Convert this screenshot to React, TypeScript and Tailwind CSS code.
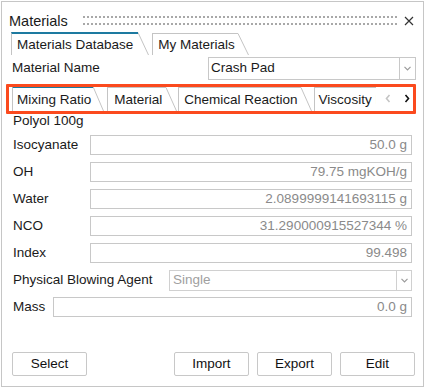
import React from "react";

const Slant = ({ h }: { h: number }) => (
  <svg width="11" height={h} className="shrink-0 block">
    <line x1="0" y1="0.5" x2="10.5" y2={h} stroke="#c4c4c4" strokeWidth="1" />
  </svg>
);

function Tab({
  label,
  active,
  h,
  pl,
  pr,
  ml,
}: {
  label: string;
  active?: boolean;
  h: number;
  pl: number;
  pr: number;
  ml: number;
}) {
  const th = active ? h : h - 1;
  return (
    <div className="flex shrink-0 items-end" style={{ marginLeft: ml, height: h }}>
      <div
        className={
          "flex items-center bg-white border-l border-[#c4c4c4] " +
          (active ? "border-t-2 border-t-[#1d7aa0]" : "border-t border-t-[#c4c4c4]")
        }
        style={{ height: th, paddingLeft: pl, paddingRight: pr }}
      >
        <span className="whitespace-nowrap leading-[16px]">{label}</span>
      </div>
      <Slant h={th} />
    </div>
  );
}

const DownArrow = () => (
  <svg width="7" height="5" viewBox="0 0 7 5">
    <polyline points="0.5,0.8 3.5,3.8 6.5,0.8" fill="none" stroke="#9a9a9a" strokeWidth="1.2" />
  </svg>
);

function Field({ label, value, lw }: { label: string; value: string; lw: number }) {
  return (
    <div className="flex items-center h-[20px] pl-[11px] pr-[11px]">
      <div className="shrink-0 whitespace-nowrap" style={{ width: lw }}>
        {label}
      </div>
      <div className="flex-1 h-[20px] border border-[#c8c8c8] flex items-center justify-end pr-[4px] text-[#8a8a8a]">
        {value}
      </div>
    </div>
  );
}

function Btn({ label }: { label: string }) {
  return (
    <div className="w-[75px] h-[24px] border border-[#c8c8c8] rounded-[2px] bg-white flex items-center justify-center text-[#111]">
      {label}
    </div>
  );
}

export default function App() {
  return (
    <div className="relative w-[426px] h-[388px] bg-white overflow-hidden font-['Liberation_Sans',Arial,sans-serif] text-[13.5px] text-[#1a1a1a]">
      <div className="ml-px mt-px w-[423px] h-[386px] border border-[#c6c6c6] flex flex-col">
        {/* Title bar */}
        <div className="h-[30px] flex items-start pt-[11px] pl-[7px] pr-[9px] shrink-0">
          <span className="text-[14.5px] leading-[16px] text-[#1a1a1a]">Materials</span>
          <svg className="flex-1 ml-[15px] mr-[7px] mt-[3px]" height="10">
            <defs>
              <pattern id="grip" x="0" y="0" width="4" height="7" patternUnits="userSpaceOnUse">
                <rect x="0" y="0" width="2" height="2" fill="#a8a8a8" />
              </pattern>
            </defs>
            <rect x="0" y="0" width="100%" height="9" fill="url(#grip)" />
          </svg>
          <svg width="10" height="10" viewBox="0 0 10 10" className="mt-[3px]">
            <path d="M1 1 L9 9 M9 1 L1 9" stroke="#333" strokeWidth="1.2" />
          </svg>
        </div>

        {/* Top tabs */}
        <div className="h-[23px] flex items-end pl-[9px] shrink-0">
          <Tab label="Materials Database" active h={23} pl={5} pr={5} ml={0} />
          <Tab label="My Materials" h={23} pl={5} pr={3} ml={3} />
        </div>

        {/* Material Name */}
        <div className="mt-[2px] h-[23px] flex items-center pl-[10px] pr-[7px] shrink-0">
          <span>Material Name</span>
          <div className="ml-auto w-[208px] h-[23px] border border-[#c8c8c8] flex">
            <div className="flex-1 flex items-center pl-[2px]">Crash Pad</div>
            <div className="w-[16px] border-l border-[#c8c8c8] flex items-center justify-center">
              <DownArrow />
            </div>
          </div>
        </div>

        {/* Inner tabs */}
        <div className="mt-[6px] h-[25px] flex items-end pl-[10px] shrink-0">
          <div className="w-[364px] flex items-end overflow-hidden h-[25px]">
            <Tab label="Mixing Ratio" active h={25} pl={4} pr={2} ml={0} />
            <Tab label="Material" h={25} pl={6} pr={4} ml={3} />
            <Tab label="Chemical Reaction" h={25} pl={5} pr={3} ml={1} />
            <Tab label="Viscosity Profile" h={25} pl={4} pr={4} ml={2} />
          </div>
          <div className="flex-1 h-[25px] flex items-center">
            <svg width="6" height="9" viewBox="0 0 6 9" className="ml-[9px]">
              <polyline points="4.5,1 1.5,4.5 4.5,8" fill="none" stroke="#c4c4c4" strokeWidth="1.6" />
            </svg>
            <svg width="6" height="9" viewBox="0 0 6 9" className="ml-[13px]">
              <polyline points="1.5,1 4.5,4.5 1.5,8" fill="none" stroke="#111" strokeWidth="1.6" />
            </svg>
          </div>
        </div>

        {/* Polyol */}
        <div className="mt-[2px] h-[16px] leading-[16px] pl-[11px] shrink-0">Polyol 100g</div>

        <div className="mt-[6px] flex flex-col gap-[7px] shrink-0">
          <Field label="Isocyanate" value="50.0 g" lw={77} />
          <Field label="OH" value="79.75 mgKOH/g" lw={77} />
          <Field label="Water" value="2.0899999141693115 g" lw={77} />
          <Field label="NCO" value="31.290000915527344 %" lw={77} />
          <Field label="Index" value="99.498" lw={77} />
          <div className="flex items-center h-[20px] pl-[11px] pr-[11px]">
            <div className="w-[156px] shrink-0 whitespace-nowrap">Physical Blowing Agent</div>
            <div className="flex-1 h-[21px] border border-[#d0d0d0] flex">
              <div className="flex-1 flex items-center pl-[3px] text-[#a0a0a0]">Single</div>
              <div className="w-[15px] border-l border-[#d0d0d0] flex items-center justify-center">
                <DownArrow />
              </div>
            </div>
          </div>
          <Field label="Mass" value="0.0 g" lw={40} />
        </div>

        {/* Buttons */}
        <div className="mt-auto mb-[10px] flex items-center pl-[10px] pr-[8px] shrink-0">
          <Btn label="Select" />
          <div className="ml-auto flex gap-[8px]">
            <Btn label="Import" />
            <Btn label="Export" />
            <Btn label="Edit" />
          </div>
        </div>
      </div>

      {/* Annotation highlight */}
      <div className="absolute left-[6px] top-[84px] w-[410px] h-[30px] border-[3px] border-[#fb4a1e] rounded-[1px] pointer-events-none" />
    </div>
  );
}
